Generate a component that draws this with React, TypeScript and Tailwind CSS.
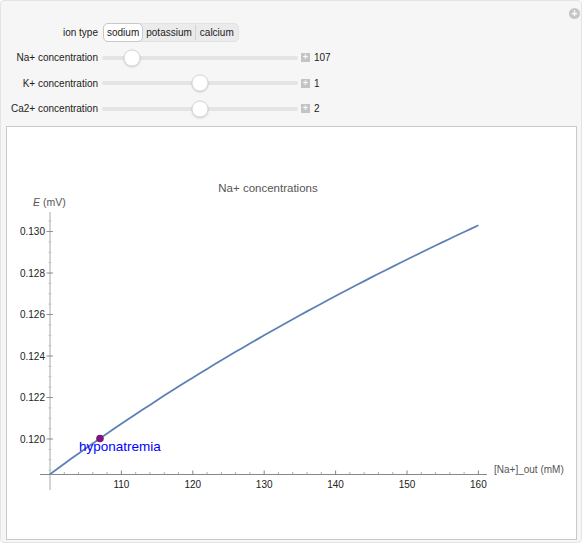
import React from "react";

const font = { fontFamily: '"Liberation Sans", Arial, sans-serif' };

// page-space mapping for the plot
const px = (v: number) => 50 + (v - 100) * 7.14;
const py = (v: number) => 437 - (v - 0.12) * 20750;
const energy = (na: number) => 0.1183 + 0.02553 * Math.log(na / 100);

function Slider({ label, pos, value }: { label: string; pos: number; value: string }) {
  return (
    <div className="flex items-center h-[25.5px]">
      <div className="w-[97px] text-right text-[10px] text-[#222]">{label}</div>
      <div className="relative ml-[4px] w-[196px] h-[4px] rounded-full bg-[#e4e4e4]">
        <div
          className="absolute top-1/2 w-[17px] h-[17px] -translate-y-1/2 -translate-x-1/2 rounded-full bg-white border border-[#d8d8d8] shadow-[0_1px_2px_rgba(0,0,0,0.15)]"
          style={{ left: pos }}
        />
      </div>
      <div className="ml-[3px] w-[9px] h-[9px] bg-[#c4c4c4] flex items-center justify-center text-white text-[9px] leading-none font-bold">
        +
      </div>
      <div className="ml-[4px] text-[10px] text-[#222]">{value}</div>
    </div>
  );
}

function Plot() {
  const curve: string[] = [];
  for (let x = 100; x <= 160; x += 1) {
    curve.push(`${x === 100 ? "M" : "L"}${px(x).toFixed(1)},${py(energy(x)).toFixed(1)}`);
  }
  const yMajor = [0.12, 0.122, 0.124, 0.126, 0.128, 0.13];
  const yMinor: number[] = [];
  for (let v = 0.1185; v <= 0.1306; v += 0.0005) yMinor.push(v);
  const xMajor = [110, 120, 130, 140, 150, 160];
  const xMinor: number[] = [];
  for (let v = 102; v <= 160; v += 2) if (v % 10 !== 0) xMinor.push(v);

  return (
    <svg width="569" height="413" viewBox="7 125 569 413" className="block">
      <text x="268" y="190" textAnchor="middle" fontSize="11.5" fill="#555">
        Na+ concentrations
      </text>
      <text x="33" y="204" fontSize="10.5" fill="#555">
        <tspan fontStyle="italic">E</tspan> (mV)
      </text>
      {/* y axis */}
      <line x1="50" y1="210" x2="50" y2="488" stroke="#aaa" strokeWidth="1" />
      {yMinor.map((v) => (
        <line key={"ym" + v} x1="48.5" y1={py(v)} x2="51.5" y2={py(v)} stroke="#bbb" strokeWidth="0.8" />
      ))}
      {yMajor.map((v) => (
        <g key={"y" + v}>
          <line x1="46.5" y1={py(v)} x2="53" y2={py(v)} stroke="#888" strokeWidth="0.9" />
          <text x="45" y={py(v) + 3.6} textAnchor="end" fontSize="10" fill="#222">
            {v.toFixed(3)}
          </text>
        </g>
      ))}
      {/* x axis */}
      <line x1="40" y1="472.5" x2="487" y2="472.5" stroke="#888" strokeWidth="1" />
      {xMinor.map((v) => (
        <line key={"xm" + v} x1={px(v)} y1="470" x2={px(v)} y2="472.5" stroke="#999" strokeWidth="0.8" />
      ))}
      {xMajor.map((v) => (
        <g key={"x" + v}>
          <line x1={px(v)} y1="468.5" x2={px(v)} y2="472.5" stroke="#777" strokeWidth="0.9" />
          <text x={px(v)} y="486" textAnchor="middle" fontSize="10" fill="#222">
            {v}
          </text>
        </g>
      ))}
      <text x="494" y="471" fontSize="10" fill="#555">
        [Na+]_out (mM)
      </text>
      <path d={curve.join(" ")} fill="none" stroke="#5e81b5" strokeWidth="1.8" />
      <circle cx={px(107)} cy={py(energy(107))} r="3.8" fill="#7d1580" />
      <text x="79" y="449" fontSize="13.5" fill="#0000ff">
        hyponatremia
      </text>
    </svg>
  );
}

export default function App() {
  return (
    <div className="w-[585px] h-[546px] bg-white" style={font}>
      <div className="relative w-[582px] h-[543px] bg-[#f6f6f6] border border-[#e4e4e4] rounded-[4px]">
        <div className="absolute right-[1px] top-[7px] w-[11px] h-[11px] rounded-full bg-[#c6c6c6] flex items-center justify-center text-white text-[10px] leading-none font-bold">
          +
        </div>
        <div className="pt-[19px]">
          <div className="flex items-center h-[25px]">
            <div className="w-[97px] text-right text-[10px] text-[#222]">ion type</div>
            <div className="ml-[5px] flex items-center h-[19px] rounded-[5px] bg-[#ebebeb] border border-[#e2e2e2] text-[10px] text-[#222]">
              <div className="h-[19px] px-[3px] -ml-px flex items-center rounded-[5px] bg-white border border-[#c8c8c8]">
                sodium
              </div>
              <div className="px-[3px] flex items-center border-r border-[#d2d2d2]">potassium</div>
              <div className="px-[4px] flex items-center">calcium</div>
            </div>
          </div>
          <Slider label="Na+ concentration" pos={30} value="107" />
          <Slider label="K+ concentration" pos={98} value="1" />
          <Slider label="Ca2+ concentration" pos={98} value="2" />
        </div>
        <div className="ml-[5px] mt-[4px] w-[571px] h-[414px] bg-white border border-[#c9c9c9]">
          <Plot />
        </div>
      </div>
    </div>
  );
}
